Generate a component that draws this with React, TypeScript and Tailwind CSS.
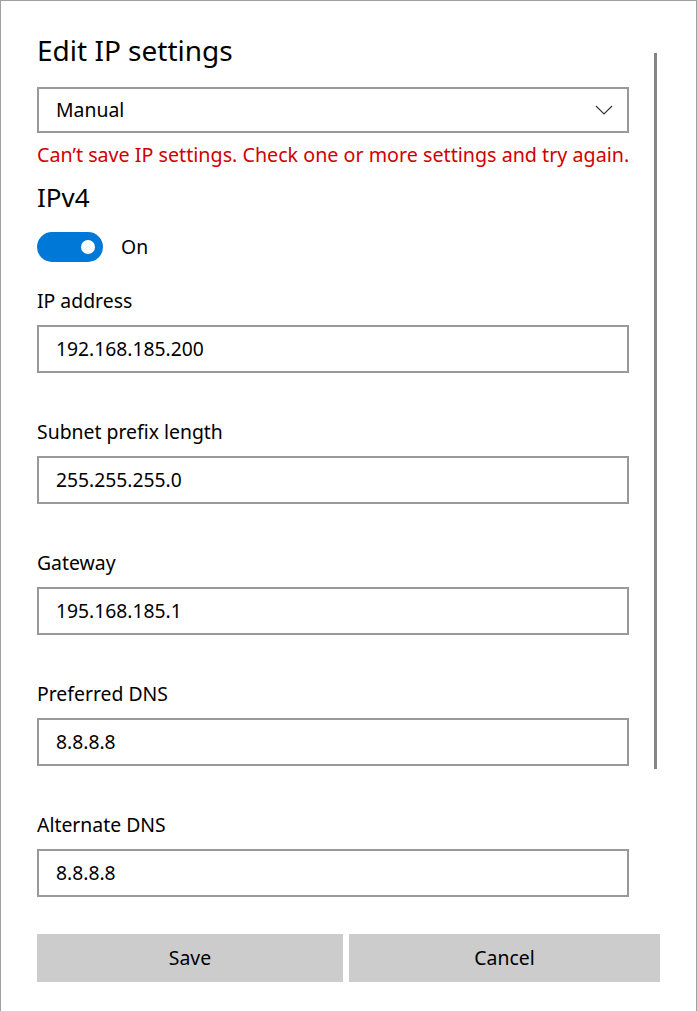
import React from "react";

const font = { fontFamily: '"Noto Sans", "Open Sans", sans-serif' };

function Field({ label, value, first }: { label: string; value: string; first?: boolean }) {
  return (
    <div className={first ? "mt-[25px]" : "mt-[45px]"}>
      <div className="h-[28px] text-[19.4px] leading-[28px] text-black">{label}</div>
      <div className="mt-[10px] flex h-[48px] w-[592px] items-center border-2 border-[#999999] bg-white pl-[17px] text-[19.3px] text-black">
        {value}
      </div>
    </div>
  );
}

export default function App() {
  return (
    <div
      className="relative h-[1011px] w-[697px] overflow-hidden border-l border-r border-t border-[#a0a0a0] bg-white pl-[36px] pt-[29px]"
      style={font}
    >
      <div className="h-[40px] text-[28px] leading-[40px] text-black">Edit IP settings</div>

      <div className="mt-[17px] flex h-[46px] w-[592px] items-center justify-between border-2 border-[#999999] pl-[17px] pr-[14px] text-[19.4px] text-black">
        <span>Manual</span>
        <svg width="18" height="10" viewBox="0 0 18 10" fill="none">
          <path d="M1 1 L9 9 L17 1" stroke="#333333" strokeWidth="1.1" />
        </svg>
      </div>

      <div className="mt-[8px] h-[28px] text-[19.7px] leading-[28px] text-[#d00000]">
        Can’t save IP settings. Check one or more settings and try again.
      </div>

      <div className="mt-[10px] h-[36px] text-[26px] leading-[36px] text-black">IPv4</div>

      <div className="mt-[17px] flex items-center">
        <div className="flex h-[30px] w-[66px] items-center justify-end rounded-full bg-[#0078d7] pr-[8px]">
          <div className="h-[14px] w-[14px] rounded-full bg-white" />
        </div>
        <span className="ml-[18px] text-[19.4px] text-black">On</span>
      </div>

      <Field label="IP address" value="192.168.185.200" first />
      <Field label="Subnet prefix length" value="255.255.255.0" />
      <Field label="Gateway" value="195.168.185.1" />
      <Field label="Preferred DNS" value="8.8.8.8" />
      <Field label="Alternate DNS" value="8.8.8.8" />

      <div className="mt-[37px] flex w-[623px] gap-[6px]">
        <button className="flex h-[48px] w-[306px] items-center justify-center bg-[#cccccc] text-[19.4px] text-black">
          Save
        </button>
        <button className="flex h-[48px] flex-1 items-center justify-center bg-[#cccccc] text-[19.4px] text-black">
          Cancel
        </button>
      </div>

      <div className="absolute left-[653px] top-[52px] h-[716px] w-[3px] bg-[#858585]" />
    </div>
  );
}
